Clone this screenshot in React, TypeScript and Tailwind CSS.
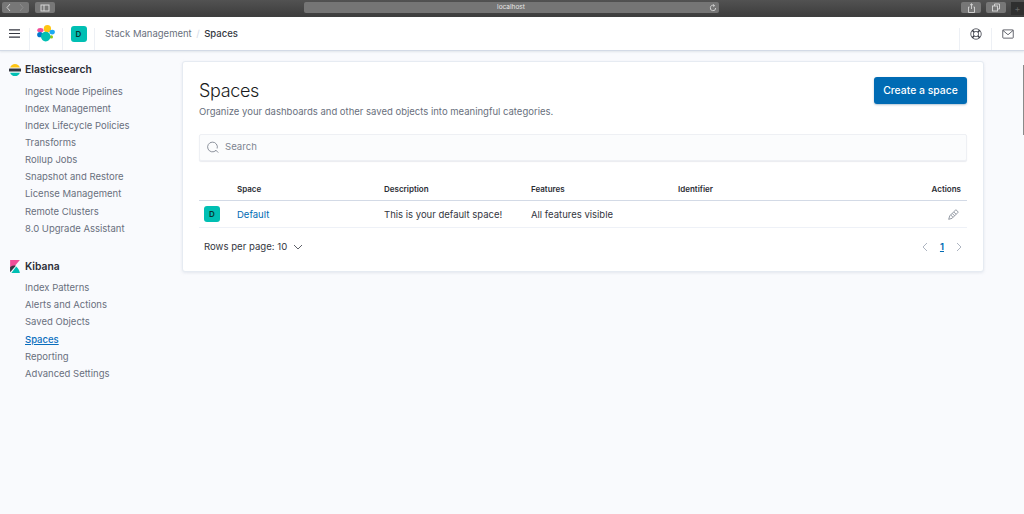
import React from "react";

const Logo = () => (
  <svg width="18" height="17" viewBox="0 0 32 30">
    <circle cx="18.5" cy="6.5" r="6.5" fill="#FEC514" />
    <ellipse cx="6" cy="9" rx="5.5" ry="3.8" fill="#F04E98" />
    <ellipse cx="5.5" cy="17" rx="5.2" ry="4.6" fill="#0077CC" />
    <ellipse cx="27" cy="12.5" rx="4.8" ry="4.2" fill="#1BA9F5" />
    <ellipse cx="25.5" cy="21" rx="3" ry="3" fill="#93C90E" />
    <circle cx="15.5" cy="20.5" r="8.5" fill="#00BFB3" />
  </svg>
);

const ElasticIcon = () => (
  <svg width="12" height="12" viewBox="0 0 32 32">
    <path d="M3 9 C5 3.5 10 0 16 0 C22 0 27 3.5 29 9 Z" fill="#FEC514" />
    <rect x="0" y="12" width="32" height="8" rx="1" fill="#343741" />
    <path d="M3 23 H29 C27 28.5 22 32 16 32 C10 32 5 28.5 3 23Z" fill="#00BFB3" />
  </svg>
);

const KibanaIcon = () => (
  <svg width="10" height="13" viewBox="0 0 24 32">
    <path d="M0 0 H24 L0 28Z" fill="#F04E98" />
    <path d="M0 17 C5 14 10 13 14 14 L0 30Z" fill="#343741" />
    <path d="M3 32 L15 16 C19 19 23 25 24 32Z" fill="#00BFB3" />
  </svg>
);

const SpaceAvatar = () => (
  <div className="flex h-[16px] w-[16px] items-center justify-center rounded-[3px] bg-[#00bfb3] text-[8px] font-semibold text-[#08332f]">D</div>
);

const Sep = () => <div className="h-[22px] w-px shrink-0 self-end bg-[#edf0f5]" />;

const SideGroup = ({ icon, title, items, className }: { icon: React.ReactNode; title: string; items: string[]; className: string }) => (
  <div className={className}>
    <div className="flex h-[18px] items-center gap-[4px] pl-[9px]">
      <span className="flex w-[12px] justify-center">{icon}</span>
      <span className="text-[10.3px] font-semibold text-[#2b2d35]">{title}</span>
    </div>
    <ul className="mt-[4.5px] pl-[25px]">
      {items.map((i) => (
        <li
          key={i}
          className={`flex h-[17.1px] items-center text-[9.5px] ${i === "Spaces" ? "font-medium text-[#0a6ebd] underline" : "text-[#69707d]"}`}
        >
          {i}
        </li>
      ))}
    </ul>
  </div>
);

const cols = "grid grid-cols-[38px_147px_147px_147px_1fr_auto] items-center";

export default function App() {
  return (
    <div className="relative flex h-[514px] w-[1024px] flex-col overflow-hidden bg-[#f9fafd] font-['Inter',sans-serif]">
      {/* Browser chrome */}
      <div className="flex h-[17px] shrink-0 items-center justify-between bg-gradient-to-b from-[#525252] to-[#3c3c3c] pb-[2px]">
        <div className="flex items-center gap-[5px] pl-[2px]">
          <div className="flex h-[11px] w-[27px] items-center rounded-[2px] bg-[#777]">
            <svg width="13" height="11" viewBox="0 0 13 11" fill="none" stroke="#d0d0d0" strokeWidth="1"><path d="M8 2 L5 5.5 L8 9" /></svg>
            <svg width="13" height="11" viewBox="0 0 13 11" fill="none" stroke="#8e8e8e" strokeWidth="1"><path d="M5 2 L8 5.5 L5 9" /></svg>
          </div>
          <div className="ml-[1px] flex h-[11px] w-[20px] items-center justify-center rounded-[2px] bg-[#777]">
            <svg width="10" height="8" viewBox="0 0 10 8" fill="none" stroke="#d8d8d8" strokeWidth="1"><rect x="1" y="1" width="8" height="6" /><path d="M4 1 V7" /></svg>
          </div>
        </div>
        <div className="relative ml-[6px] flex h-[11px] w-[415px] items-center justify-center rounded-[2px] bg-[#757575]">
          <span className="pt-[1px] text-[6.5px] text-[#e8e8e8]">localhost</span>
          <svg className="absolute right-[2px] top-[1.5px]" width="8" height="8" viewBox="0 0 24 24" fill="none" stroke="#cfcfcf" strokeWidth="3"><path d="M20 12 A8 8 0 1 1 15 4.6" /><path d="M13 1 L17 5 L13 8" /></svg>
        </div>
        <div className="flex items-center gap-[5px]">
          <div className="flex h-[11px] w-[20px] items-center justify-center rounded-[2px] bg-[#777]">
            <svg width="9" height="10" viewBox="0 0 9 10" fill="none" stroke="#d8d8d8" strokeWidth="0.9"><path d="M2.5 4 H1.5 V9.5 H7.5 V4 H6.5 M4.5 6 V0.8 M3 2.2 L4.5 0.8 L6 2.2" /></svg>
          </div>
          <div className="flex h-[11px] w-[20px] items-center justify-center rounded-[2px] bg-[#777]">
            <svg width="10" height="9" viewBox="0 0 10 9" fill="none" stroke="#d8d8d8" strokeWidth="0.9"><rect x="1.5" y="3" width="5" height="5" /><path d="M3.5 3 V1 H8.5 V6 H6.5" /></svg>
          </div>
          <div className="-mb-[2px] flex h-[13px] w-[13px] items-center justify-center self-end bg-[#2f2f2f] text-[9px] leading-none text-[#666]">+</div>
        </div>
      </div>

      {/* Kibana header */}
      <div className="flex h-[34px] shrink-0 items-stretch border-b border-b-[#d3dae6] bg-white shadow-[0_1px_2px_rgba(152,162,179,0.25)]">
        <div className="flex w-[29px] items-center justify-center pr-[1px]">
          <svg width="11" height="9" viewBox="0 0 11 9" stroke="#343741" strokeWidth="1.2"><path d="M0 0.8 H11 M0 4.5 H11 M0 8.2 H11" /></svg>
        </div>
        <Sep />
        <div className="flex w-[32px] items-center justify-center">
          <Logo />
        </div>
        <Sep />
        <div className="flex w-[31px] items-center justify-center">
          <SpaceAvatar />
        </div>
        <Sep />
        <div className="flex items-center gap-[4.5px] pl-[10px] pt-[1px] text-[9.5px]">
          <span className="text-[#69707d]">Stack Management</span>
          <span className="text-[#d3dae6]">/</span>
          <span className="font-medium text-[#343741]">Spaces</span>
        </div>
        <div className="ml-auto flex">
          <Sep />
          <div className="flex w-[31px] items-center justify-center">
            <svg width="12" height="12" viewBox="0 0 16 16" fill="none" stroke="#343741" strokeWidth="1"><circle cx="8" cy="8" r="7" /><circle cx="8" cy="8" r="3.5" /><path d="M3 3 L5.5 5.5 M13 3 L10.5 5.5 M3 13 L5.5 10.5 M13 13 L10.5 10.5" strokeWidth="2" /></svg>
          </div>
          <Sep />
          <div className="flex w-[32px] items-center justify-center">
            <svg width="12" height="10" viewBox="0 0 16 13" fill="none" stroke="#343741" strokeWidth="1"><rect x="1" y="1" width="14" height="11" rx="1" /><path d="M1 1.5 L8 7.5 L15 1.5" /></svg>
          </div>
        </div>
      </div>

      {/* Body */}
      <div className="flex min-h-0 flex-1">
        <aside className="w-[182px] shrink-0 pt-[10px]">
          <SideGroup
            className="mb-[20px]"
            icon={<ElasticIcon />}
            title="Elasticsearch"
            items={["Ingest Node Pipelines", "Index Management", "Index Lifecycle Policies", "Transforms", "Rollup Jobs", "Snapshot and Restore", "License Management", "Remote Clusters", "8.0 Upgrade Assistant"]}
          />
          <SideGroup
            className=""
            icon={<KibanaIcon />}
            title="Kibana"
            items={["Index Patterns", "Alerts and Actions", "Saved Objects", "Spaces", "Reporting", "Advanced Settings"]}
          />
        </aside>

        <div className="min-w-0 flex-1 pr-[40px] pt-[10px]">
          <section className="h-[211px] rounded-[3px] border border-[#e6ebf2] bg-white px-[16px] pt-[15px] shadow-[0_1px_3px_rgba(152,162,179,0.2)]">
            <div className="flex items-start justify-between">
              <div>
                <h1 className="text-[18px] leading-[28px] font-light tracking-[-0.02em] text-[#1a1c21]">Spaces</h1>
                <p className="text-[9.5px] leading-[14px] text-[#69707d]">Organize your dashboards and other saved objects into meaningful categories.</p>
              </div>
              <button className="h-[27px] w-[93px] rounded-[3px] bg-[#006bb4] text-[10.4px] font-medium text-white shadow-[0_1px_2px_rgba(0,60,110,0.3)]">Create a space</button>
            </div>

            <div className="mt-[15px] flex h-[27px] items-center gap-[6px] rounded-[2px] border border-[#eef0f4] bg-[#fbfcfd] pl-[7px] shadow-[0_1px_1px_rgba(152,162,179,0.2)]">
              <svg className="-mt-[2px]" width="12" height="12" viewBox="0 0 16 16" fill="none" stroke="#69707d" strokeWidth="1"><path d="M12 12.5 A6.5 6.5 0 1 1 13.5 10" /><path d="M11.5 12 L15 15.5" /></svg>
              <span className="text-[9.6px] text-[#7d8490]">Search</span>
            </div>

            <div className={`${cols} mt-[16px] h-[24px] border-b border-b-[#d3dae6] text-[8px] font-semibold text-[#2b2d35]`}>
              <span />
              <span>Space</span>
              <span>Description</span>
              <span>Features</span>
              <span>Identifier</span>
              <span className="pr-[6px]">Actions</span>
            </div>
            <div className={`${cols} h-[27px] border-b border-b-[#eef1f7] text-[9.5px] text-[#343741]`}>
              <span className="pl-[5px]"><SpaceAvatar /></span>
              <span className="pt-[2px] text-[#006bb4]">Default</span>
              <span className="pt-[2px]">This is your default space!</span>
              <span className="pt-[2px]">All features visible</span>
              <span />
              <span className="flex justify-end pr-[8px]">
                <svg width="11" height="11" viewBox="0 0 16 16" fill="none" stroke="#7d8490" strokeWidth="1.2"><path d="M1 15 L2.5 10 L11.5 1 L15 4.5 L6 13.5 Z" /><path d="M4 8.8 L7.3 12 M6.3 6.6 L9.5 9.8 M8.5 4.4 L11.7 7.6" /></svg>
              </span>
            </div>

            <div className="flex h-[36px] items-center justify-between pt-[2px] text-[9.6px] text-[#343741]">
              <div className="flex items-center gap-[6px] pl-[5px]">
                <span>Rows per page: 10</span>
                <svg width="10" height="6" viewBox="0 0 10 6" fill="none" stroke="#343741" strokeWidth="0.8"><path d="M1 1 L5 5 L9 1" /></svg>
              </div>
              <div className="flex items-center gap-[12px] pr-[5px]">
                <svg width="6" height="10" viewBox="0 0 6 10" fill="none" stroke="#a5adba" strokeWidth="0.9"><path d="M5 1 L1 5 L5 9" /></svg>
                <span className="font-semibold text-[#006bb4] underline">1</span>
                <svg width="6" height="10" viewBox="0 0 6 10" fill="none" stroke="#a5adba" strokeWidth="0.9"><path d="M1 1 L5 5 L1 9" /></svg>
              </div>
            </div>
          </section>
        </div>
      </div>

      {/* Scrollbar thumb */}
      <div className="absolute right-0 top-[65px] h-[70px] w-[1px] bg-[#8a8a8a]" />
    </div>
  );
}
